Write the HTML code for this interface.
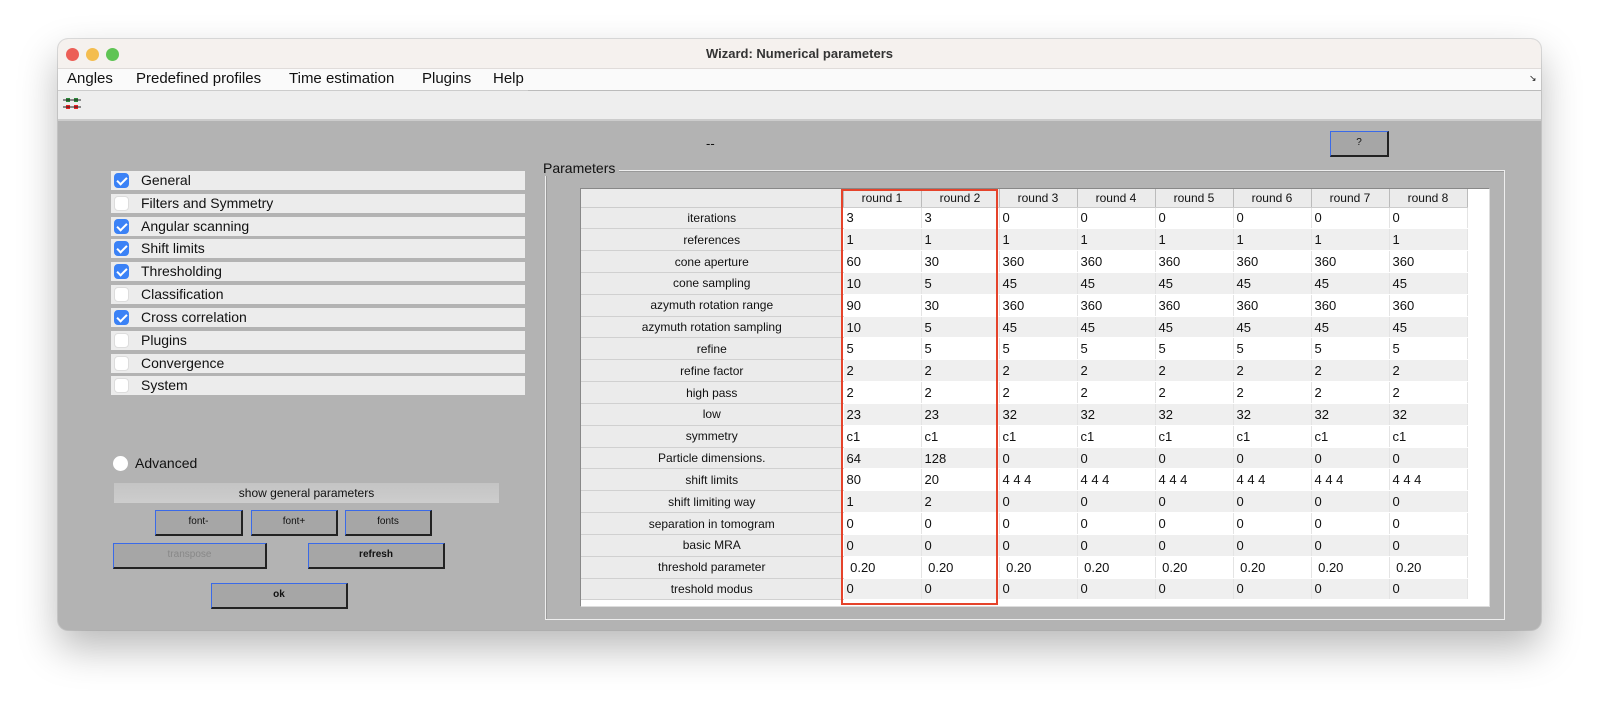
<!DOCTYPE html>
<html><head><meta charset="utf-8"><style>
*{box-sizing:border-box;margin:0;padding:0}
body{width:1600px;height:707px;background:#fff;position:relative;overflow:hidden;font-family:"Liberation Sans",sans-serif;color:#111}
.a{position:absolute}
#win{left:58px;top:39px;width:1483px;height:591px;border-radius:10px;overflow:hidden;background:#b3b3b3;box-shadow:0 18px 40px rgba(0,0,0,.28),0 0 0 1px rgba(0,0,0,.12)}
.dot{width:13px;height:13px;border-radius:50%;top:9px}
.m{top:31px;font-size:15px}
.cb{left:53px;width:414px;height:19px;background:#ececec;font-size:14px;line-height:19px}
.cb span{position:absolute;left:30px}
.box{position:absolute;left:3px;top:2px;width:15px;height:15px;border-radius:4px;background:#fff;border:1px solid #ddd}
.box.on{background:#3b82f6;border-color:#3b82f6}
.box.on:after{content:"";position:absolute;left:4px;top:1px;width:4px;height:8px;border:solid #fff;border-width:0 2px 2px 0;transform:rotate(45deg)}
.btn{background:#a6a6a6;border-top:1px solid #3a6ae8;border-left:1px solid #3a6ae8;border-right:2px solid #222;border-bottom:2px solid #222;font-size:10px;text-align:center;line-height:22px}
table{border-collapse:collapse;font-size:12px;table-layout:fixed}
td{height:21.83px;border-right:1px solid #e4e4e4;border-bottom:1px solid #fff;padding:0 0 0 3px;font-size:13px}
td.l{text-align:center;background:#ebebeb;border-right:1px solid #fff;border-bottom:1px solid #d0d0d0;font-size:12px;padding:0}
tr:nth-child(even) td:not(.l){background:#fff}
tr:nth-child(odd) td:not(.l){background:#efefef}
th{height:18px;font-weight:normal;background:#ebebeb;border-right:1px solid #bbb;border-bottom:1px solid #ccc;font-size:12px}
</style></head><body>
<div id="win" class="a">
 <div class="a" style="left:0;top:0;width:1483px;height:30px;background:#f5f1ee;border-bottom:1px solid #e0dcda"></div>
 <div class="a dot" style="left:8px;background:#ec5f57"></div>
 <div class="a dot" style="left:28px;background:#f4bd4f"></div>
 <div class="a dot" style="left:48px;background:#5fc454"></div>
 <div class="a" style="left:0;top:7px;width:1483px;text-align:center;font-size:13px;font-weight:bold;color:#333">Wizard: Numerical parameters</div>
 <div class="a" style="left:0;top:30px;width:1483px;height:22px;background:#fafafa;border-bottom:1px solid #ccc"></div>
 <div class="a" style="left:470px;top:51px;width:1013px;height:1px;background:#bbb"></div>
 <div class="a m" style="left:9px">Angles</div>
 <div class="a m" style="left:78px">Predefined profiles</div>
 <div class="a m" style="left:231px">Time estimation</div>
 <div class="a m" style="left:364px">Plugins</div>
 <div class="a m" style="left:435px">Help</div>
 <div class="a" style="left:1471px;top:34px;font-size:9px">↘</div>
 <div class="a" style="left:0;top:52px;width:1483px;height:30px;background:#eeeeee;border-bottom:2px solid #ccc"></div>
 <svg class="a" style="left:5px;top:58px" width="18" height="14"><rect x="3" y="1" width="4" height="4" fill="#2c8a3a"/><rect x="11" y="1" width="4" height="4" fill="#2c8a3a"/><line x1="0" y1="3" x2="18" y2="3" stroke="#222"/><rect x="3" y="8" width="4" height="4" fill="#e22"/><rect x="11" y="8" width="4" height="4" fill="#e22"/><line x1="0" y1="10" x2="18" y2="10" stroke="#222"/></svg>

 <div class="a" style="left:648px;top:97px;font-size:13px">--</div>
 <div class="a btn" style="left:1272px;top:92px;width:59px;height:26px">?</div>

 <div class="a cb" style="top:132px"><div class="box on"></div><span>General</span></div>
 <div class="a cb" style="top:155px"><div class="box"></div><span>Filters and Symmetry</span></div>
 <div class="a cb" style="top:178px"><div class="box on"></div><span>Angular scanning</span></div>
 <div class="a cb" style="top:200px"><div class="box on"></div><span>Shift limits</span></div>
 <div class="a cb" style="top:223px"><div class="box on"></div><span>Thresholding</span></div>
 <div class="a cb" style="top:246px"><div class="box"></div><span>Classification</span></div>
 <div class="a cb" style="top:269px"><div class="box on"></div><span>Cross correlation</span></div>
 <div class="a cb" style="top:292px"><div class="box"></div><span>Plugins</span></div>
 <div class="a cb" style="top:315px"><div class="box"></div><span>Convergence</span></div>
 <div class="a cb" style="top:337px"><div class="box"></div><span>System</span></div>

 <div class="a" style="left:55px;top:417px;width:15px;height:15px;border-radius:50%;background:#fff"></div>
 <div class="a" style="left:77px;top:416px;font-size:14px">Advanced</div>
 <div class="a" style="left:56px;top:444px;width:385px;height:20px;background:linear-gradient(#c4c4c4,#cdcdcd);font-size:12px;text-align:center;line-height:20px">show general parameters</div>
 <div class="a btn" style="left:97px;top:471px;width:88px;height:26px">font-</div>
 <div class="a btn" style="left:193px;top:471px;width:87px;height:26px">font+</div>
 <div class="a btn" style="left:287px;top:471px;width:87px;height:26px">fonts</div>
 <div class="a btn" style="left:55px;top:504px;width:154px;height:26px;color:#888">transpose</div>
 <div class="a btn" style="left:250px;top:504px;width:137px;height:26px;font-weight:bold">refresh</div>
 <div class="a btn" style="left:153px;top:544px;width:137px;height:26px;font-weight:bold">ok</div>

 <div class="a" style="left:487px;top:131px;width:960px;height:450px;border:1px solid #eee;box-shadow:inset 1px 1px 0 #999"></div>
 <div class="a" style="left:481px;top:121px;padding:0 4px;background:#b3b3b3;font-size:14px">Parameters</div>
 <div class="a" style="left:522px;top:149px;width:910px;height:419px;background:#fff;border:1px solid #888;border-right-color:#ddd;border-bottom-color:#ddd"></div>
 <table class="a" style="left:523px;top:150px;width:886px">
  <colgroup><col style="width:262px"><col span="8" style="width:78px"></colgroup>
  <tr><th style="background:#ebebeb"></th><th>round 1</th><th>round 2</th><th>round 3</th><th>round 4</th><th>round 5</th><th>round 6</th><th>round 7</th><th>round 8</th></tr>
  <tr><td class="l">iterations</td><td>3</td><td>3</td><td>0</td><td>0</td><td>0</td><td>0</td><td>0</td><td>0</td></tr>
  <tr><td class="l">references</td><td>1</td><td>1</td><td>1</td><td>1</td><td>1</td><td>1</td><td>1</td><td>1</td></tr>
  <tr><td class="l">cone aperture</td><td>60</td><td>30</td><td>360</td><td>360</td><td>360</td><td>360</td><td>360</td><td>360</td></tr>
  <tr><td class="l">cone sampling</td><td>10</td><td>5</td><td>45</td><td>45</td><td>45</td><td>45</td><td>45</td><td>45</td></tr>
  <tr><td class="l">azymuth rotation range</td><td>90</td><td>30</td><td>360</td><td>360</td><td>360</td><td>360</td><td>360</td><td>360</td></tr>
  <tr><td class="l">azymuth rotation sampling</td><td>10</td><td>5</td><td>45</td><td>45</td><td>45</td><td>45</td><td>45</td><td>45</td></tr>
  <tr><td class="l">refine</td><td>5</td><td>5</td><td>5</td><td>5</td><td>5</td><td>5</td><td>5</td><td>5</td></tr>
  <tr><td class="l">refine factor</td><td>2</td><td>2</td><td>2</td><td>2</td><td>2</td><td>2</td><td>2</td><td>2</td></tr>
  <tr><td class="l">high pass</td><td>2</td><td>2</td><td>2</td><td>2</td><td>2</td><td>2</td><td>2</td><td>2</td></tr>
  <tr><td class="l">low</td><td>23</td><td>23</td><td>32</td><td>32</td><td>32</td><td>32</td><td>32</td><td>32</td></tr>
  <tr><td class="l">symmetry</td><td>c1</td><td>c1</td><td>c1</td><td>c1</td><td>c1</td><td>c1</td><td>c1</td><td>c1</td></tr>
  <tr><td class="l">Particle dimensions.</td><td>64</td><td>128</td><td>0</td><td>0</td><td>0</td><td>0</td><td>0</td><td>0</td></tr>
  <tr><td class="l">shift limits</td><td>80</td><td>20</td><td>4 4 4</td><td>4 4 4</td><td>4 4 4</td><td>4 4 4</td><td>4 4 4</td><td>4 4 4</td></tr>
  <tr><td class="l">shift limiting way</td><td>1</td><td>2</td><td>0</td><td>0</td><td>0</td><td>0</td><td>0</td><td>0</td></tr>
  <tr><td class="l">separation in tomogram</td><td>0</td><td>0</td><td>0</td><td>0</td><td>0</td><td>0</td><td>0</td><td>0</td></tr>
  <tr><td class="l">basic MRA</td><td>0</td><td>0</td><td>0</td><td>0</td><td>0</td><td>0</td><td>0</td><td>0</td></tr>
  <tr><td class="l">threshold parameter</td><td>&nbsp;0.20</td><td>&nbsp;0.20</td><td>&nbsp;0.20</td><td>&nbsp;0.20</td><td>&nbsp;0.20</td><td>&nbsp;0.20</td><td>&nbsp;0.20</td><td>&nbsp;0.20</td></tr>
  <tr><td class="l">treshold modus</td><td>0</td><td>0</td><td>0</td><td>0</td><td>0</td><td>0</td><td>0</td><td>0</td></tr>
 </table>
 <div class="a" style="left:783px;top:150px;width:157px;height:416px;border:2px solid #e5432b"></div>
</div>
</body></html>
